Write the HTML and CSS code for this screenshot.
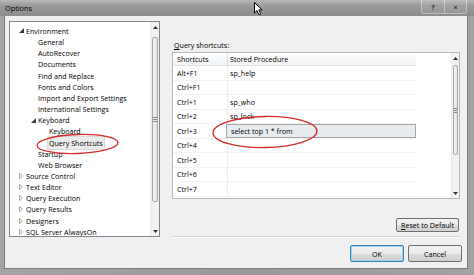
FILE: index.html
```html
<!DOCTYPE html>
<html lang="en">
<head>
  <meta charset="UTF-8" />
  <title>Options</title>
  <link rel="stylesheet" href="styles.css">
</head>
<body>

<div class="window">
  <div class="titlebar">
    <span class="title">Options</span>
    <div class="caption">
      <span class="cap-btn">?</span>
      <span class="cap-btn">&#215;</span>
    </div>
  </div>

  <div class="client">
    <div class="main">
      <!-- left tree -->
      <div class="tree-box">
        <div class="tree">
          <div class="node lvl0"><span class="twisty"><svg width="5" height="5"><path d="M5 0V5H0Z" fill="#3a3a3a"/></svg></span>Environment</div>
          <div class="node lvl1"><span class="twisty"></span>General</div>
          <div class="node lvl1"><span class="twisty"></span>AutoRecover</div>
          <div class="node lvl1"><span class="twisty"></span>Documents</div>
          <div class="node lvl1"><span class="twisty"></span>Find and Replace</div>
          <div class="node lvl1"><span class="twisty"></span>Fonts and Colors</div>
          <div class="node lvl1"><span class="twisty"></span>Import and Export Settings</div>
          <div class="node lvl1"><span class="twisty"></span>International Settings</div>
          <div class="node lvl1"><span class="twisty"><svg width="5" height="5"><path d="M5 0V5H0Z" fill="#3a3a3a"/></svg></span>Keyboard</div>
          <div class="node lvl2"><span class="twisty"></span>Keyboard</div>
          <div class="node lvl2 selected"><span class="twisty"></span><span class="sel">Query Shortcuts</span></div>
          <div class="node lvl1"><span class="twisty"></span>Startup</div>
          <div class="node lvl1"><span class="twisty"></span>Web Browser</div>
          <div class="node lvl0"><span class="twisty"><svg width="4" height="6"><path d="M0.5 0.5L3.5 3L0.5 5.5Z" fill="none" stroke="#a8a8a8"/></svg></span>Source Control</div>
          <div class="node lvl0"><span class="twisty"><svg width="4" height="6"><path d="M0.5 0.5L3.5 3L0.5 5.5Z" fill="none" stroke="#a8a8a8"/></svg></span>Text Editor</div>
          <div class="node lvl0"><span class="twisty"><svg width="4" height="6"><path d="M0.5 0.5L3.5 3L0.5 5.5Z" fill="none" stroke="#a8a8a8"/></svg></span>Query Execution</div>
          <div class="node lvl0"><span class="twisty"><svg width="4" height="6"><path d="M0.5 0.5L3.5 3L0.5 5.5Z" fill="none" stroke="#a8a8a8"/></svg></span>Query Results</div>
          <div class="node lvl0"><span class="twisty"><svg width="4" height="6"><path d="M0.5 0.5L3.5 3L0.5 5.5Z" fill="none" stroke="#a8a8a8"/></svg></span>Designers</div>
          <div class="node lvl0"><span class="twisty"><svg width="4" height="6"><path d="M0.5 0.5L3.5 3L0.5 5.5Z" fill="none" stroke="#a8a8a8"/></svg></span>SQL Server AlwaysOn</div>
        </div>
        <div class="vscroll tree-scroll">
          <div class="sb-btn"><svg width="5" height="3"><path d="M0 3L2.5 0L5 3Z" fill="#333"/></svg></div>
          <div class="sb-track"><div class="sb-thumb"><span class="grip"></span></div></div>
          <div class="sb-btn"><svg width="5" height="3"><path d="M0 0L2.5 3L5 0Z" fill="#333"/></svg></div>
        </div>
      </div>

      <!-- right page -->
      <div class="page">
        <div class="page-label"><u>Q</u>uery shortcuts:</div>
        <div class="grid-box">
          <div class="grid">
            <div class="grid-head"><span class="col1">Shortcuts</span><span class="col2">Stored Procedure</span></div>
            <div class="grid-row"><span class="col1">Alt+F1</span><span class="col2">sp_help</span></div>
            <div class="grid-row"><span class="col1">Ctrl+F1</span><span class="col2"></span></div>
            <div class="grid-row"><span class="col1">Ctrl+1</span><span class="col2">sp_who</span></div>
            <div class="grid-row"><span class="col1">Ctrl+2</span><span class="col2">sp_lock</span></div>
            <div class="grid-row"><span class="col1">Ctrl+3</span><span class="col2 edit">select top 1 * from</span></div>
            <div class="grid-row"><span class="col1">Ctrl+4</span><span class="col2"></span></div>
            <div class="grid-row"><span class="col1">Ctrl+5</span><span class="col2"></span></div>
            <div class="grid-row"><span class="col1">Ctrl+6</span><span class="col2"></span></div>
            <div class="grid-row"><span class="col1">Ctrl+7</span><span class="col2"></span></div>
          </div>
          <div class="vscroll grid-scroll">
            <div class="sb-btn"><svg width="5" height="3"><path d="M0 3L2.5 0L5 3Z" fill="#333"/></svg></div>
            <div class="sb-track"><div class="sb-thumb"><span class="grip"></span></div></div>
            <div class="sb-btn"><svg width="5" height="3"><path d="M0 0L2.5 3L5 0Z" fill="#333"/></svg></div>
          </div>
        </div>
        <div class="reset-row"><button class="btn reset"><u>R</u>eset to Default</button></div>
        <div class="separator"></div>
      </div>
    </div>

    <div class="footer">
      <button class="btn default">OK</button>
      <button class="btn">Cancel</button>
    </div>
  </div>

  <!-- red marks drawn over the screenshot -->
  <svg class="marks" width="474" height="275">
    <ellipse cx="77.5" cy="144" rx="40.5" ry="9.5" transform="rotate(-2 77.5 144)" />
    <ellipse cx="265" cy="132" rx="52" ry="15.5" transform="rotate(-1 265 132)" />
  </svg>

  <svg class="cursor" width="10" height="14">
    <path d="M0.5 0.5V11L3 8.6L5 12.8L6.8 12L4.9 7.9H8.2Z" fill="#fff" stroke="#000" stroke-width="1" stroke-linejoin="round"/>
  </svg>
</div>

</body>
</html>
```

FILE: styles.css
```css
* {
  box-sizing: border-box;
}
body {
  margin: 0;
  font-family: "Open Sans", "Noto Sans", sans-serif;
  font-size: 7.1px;
  color: #000;
  background: #9d9d9d;
}
.window {
  position: relative;
  width: 474px;
  height: 275px;
  display: flex;
  flex-direction: column;
  background: linear-gradient(90deg, #a4a4a4, #999999 50%, #a2a2a2);
  overflow: hidden;
}
.titlebar {
  position: relative;
  height: 16px;
  display: flex;
  align-items: center;
  padding-left: 5px;
  background: linear-gradient(#b8b8b8, #999999 35%, #8d8d8d);
}
.title {
  font-size: 7.3px;
  color: #000;
}
.caption {
  position: absolute;
  top: 0;
  right: 7px;
  display: flex;
}
.cap-btn {
  width: 23px;
  height: 14px;
  display: flex;
  align-items: center;
  justify-content: center;
  font-weight: bold;
  color: #333;
  border: 1px solid rgba(255,255,255,0.35);
  border-top: none;
  background: rgba(255,255,255,0.08);
}
.cap-btn:first-child {
  border-radius: 0 0 0 3px;
  border-right: none;
}
.cap-btn:last-child {
  border-radius: 0 0 3px 0;
}
.client {
  flex: 1;
  margin: 0 7px 7px 5px;
  background: #f0f0f0;
  box-shadow: 0 0 0 1px #7e7e7e;
  display: flex;
  flex-direction: column;
}
.main {
  display: flex;
  gap: 12px;
  padding: 5px 7px 0 4px;
}

/* tree */
.tree-box {
  width: 151px;
  height: 216px;
  border: 1px solid #828790;
  background: #fff;
  display: flex;
}
.tree {
  flex: 1;
  padding-top: 3.4px;
  overflow: hidden;
}
.node {
  height: 11.17px;
  display: flex;
  align-items: center;
  white-space: nowrap;
}
.lvl0 { padding-left: 9px; }
.lvl1 { padding-left: 21px; }
.lvl2 { padding-left: 32px; }
.twisty {
  width: 7px;
  flex: none;
  display: flex;
  align-items: center;
}
.sel {
  margin-left: -2px;
  padding: 1px;
  background: #ebebeb;
  border: 1px solid #d9d9d9;
  border-radius: 1px;
}

/* scrollbars */
.vscroll {
  width: 9px;
  display: flex;
  flex-direction: column;
  background: #f2f2f2;
  border-left: 1px solid #eaeaea;
}
.sb-btn {
  height: 10px;
  display: flex;
  align-items: center;
  justify-content: center;
}
.sb-track {
  flex: 1;
}
.sb-thumb {
  display: flex;
  align-items: center;
  justify-content: center;
  margin: 0 1px;
  border: 1px solid #a8a8a8;
  border-radius: 2px;
  background: linear-gradient(90deg, #f4f4f4, #e2e2e2);
}
.tree-scroll .sb-thumb {
  margin-top: 5px;
  height: 165px;
}
.grid-scroll .sb-thumb {
  margin-top: 2px;
  height: 90px;
}
.grip {
  width: 4px;
  height: 5px;
  background: repeating-linear-gradient(#8a8a8a 0, #8a8a8a 1px, transparent 1px, transparent 2px);
}

/* right page */
.page {
  flex: 1;
  display: flex;
  flex-direction: column;
}
.page-label {
  margin-top: 19px;
  height: 10px;
  line-height: 10px;
  margin-bottom: 2px;
  padding-left: 2px;
}
.grid-box {
  height: 147px;
  border: 1px solid #b9b9b9;
  background: #fff;
  display: flex;
}
.grid {
  width: 243px;
}
.grid-head {
  height: 13px;
  display: flex;
  border-bottom: 1px solid #e2e2e2;
  background: linear-gradient(#ffffff, #f2f3f5);
}
.grid-row {
  height: 14.5px;
  display: flex;
  border-bottom: 1px solid #f1f1f1;
}
.col1 {
  width: 55px;
  flex: none;
  padding-left: 4px;
  display: flex;
  align-items: center;
  border-right: 1px solid #ececec;
}
.grid-head .col1 {
  border-right-color: #dedede;
}
.col2 {
  flex: 1;
  padding-left: 2px;
  display: flex;
  align-items: center;
}
.col2.edit {
  margin-left: -2px;
  padding-left: 4px;
  border: 1px solid #a7a7a7;
  background: #e8ebee;
}
.grid-scroll {
  margin-left: auto;
  width: 8px;
}
.reset-row {
  margin-top: 19px;
  display: flex;
  justify-content: flex-end;
  padding-right: 1px;
}
.separator {
  margin-top: 4px;
  height: 2px;
  border-top: 1px solid #d6d6d6;
  border-bottom: 1px solid #ffffff;
}

/* buttons */
.btn {
  width: 54px;
  height: 17px;
  padding: 0;
  font-family: inherit;
  font-size: 7.1px;
  color: #000;
  border: 1px solid #707070;
  border-radius: 2px;
  background: linear-gradient(#f2f2f2 0, #ebebeb 50%, #dddddd 50%, #cfcfcf 100%);
}
.btn.reset {
  width: 63px;
  height: 14px;
}
.btn.default {
  border-color: #3c7fb1;
  box-shadow: inset 0 0 0 1px #9cd5f3;
}
.footer {
  display: flex;
  justify-content: flex-end;
  gap: 4px;
  padding: 7px 5px 0 0;
}

/* overlays */
.marks {
  position: absolute;
  left: 0;
  top: 0;
  pointer-events: none;
}
.marks ellipse {
  fill: none;
  stroke: #d42a2a;
  stroke-width: 1.3;
}
.cursor {
  position: absolute;
  left: 254px;
  top: 2px;
}
```
